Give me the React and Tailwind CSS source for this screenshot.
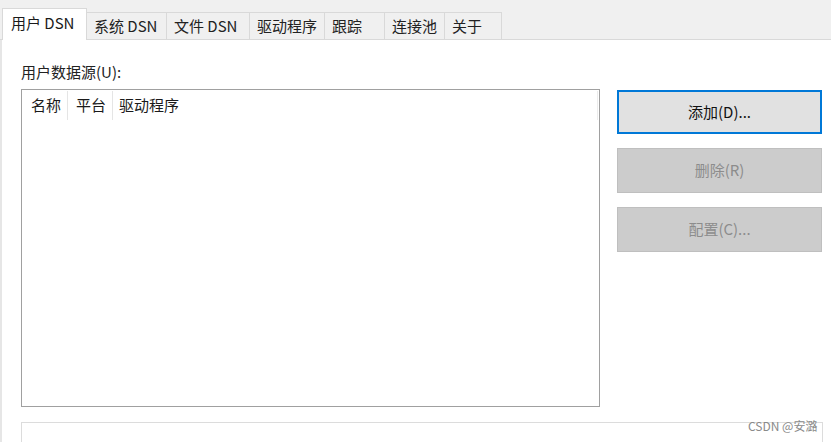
export default function App() {
  const font = { fontFamily: '"Noto Sans CJK SC", "Microsoft YaHei", sans-serif' };
  const tabs = [
    { label: "系统 DSN", w: "w-[80px]" },
    { label: "文件 DSN", w: "w-[83px]" },
    { label: "驱动程序", w: "w-[75px]" },
    { label: "跟踪", w: "w-[60px]" },
    { label: "连接池", w: "w-[60px]" },
    { label: "关于", w: "w-[57px]" },
  ];
  return (
    <div
      className="relative w-[831px] h-[442px] overflow-hidden bg-white text-[15px] text-[#1a1a1a] font-['Noto_Sans_CJK_SC',sans-serif]"
      style={font}
    >
      {/* tab strip */}
      <div className="flex items-end h-[40px] bg-[#f0f0f0] border-b border-[#d9d9d9] pl-[2px]">
        <div className="relative z-10 flex items-start w-[85px] h-[32px] -mb-px bg-white border border-b-0 border-[#d9d9d9] pl-[8px] pt-[3px] leading-[22px]">
          用户 DSN
        </div>
        {tabs.map((t) => (
          <div
            key={t.label}
            className={`flex items-start ${t.w} h-[27px] bg-[#f0f0f0] border-t border-r border-[#d9d9d9] pl-[7px] pt-[2px] leading-[22px] text-[#222]`}
          >
            {t.label}
          </div>
        ))}
      </div>

      {/* body */}
      <div className="h-[402px] border-l-2 border-[#e6e6e6] pl-[19px] pr-[9px]">
        <div className="pt-[21px] h-[49px] leading-[22px] text-[#222]">用户数据源(U):</div>
        <div className="flex gap-[17px]">
          {/* list */}
          <div className="w-[579px] h-[318px] border border-[#a0a0a0] bg-white">
            <div className="flex h-[30px] items-center pt-[1px]">
              <div className="w-[46px] h-full flex items-center pl-[9px] border-r border-[#e5e5e5]">名称</div>
              <div className="w-[45px] h-full flex items-center pl-[8px] border-r border-[#e5e5e5]">平台</div>
              <div className="w-[485px] h-full flex items-center pl-[6px] border-r border-[#ececec]">驱动程序</div>
            </div>
          </div>
          {/* buttons */}
          <div className="flex flex-col gap-[14px] pt-[1px] w-[205px]">
            <div className="h-[44px] flex items-center justify-center bg-[#e1e1e1] border-2 border-[#0078d7] text-[#111]">
              添加(D)...
            </div>
            <div className="h-[45px] flex items-center justify-center bg-[#cccccc] border border-[#bfbfbf] text-[#8c8c8c]">
              删除(R)
            </div>
            <div className="h-[45px] flex items-center justify-center bg-[#cccccc] border border-[#bfbfbf] text-[#8c8c8c]">
              配置(C)...
            </div>
          </div>
        </div>
        <div className="mt-[15px] w-[802px] h-[40px] border border-[#dcdcdc]"></div>
      </div>

      <div className="absolute left-[748px] top-[416px] text-[12px] leading-[20px] text-[#8a8a8a]">
        CSDN @安潞
      </div>
    </div>
  );
}
